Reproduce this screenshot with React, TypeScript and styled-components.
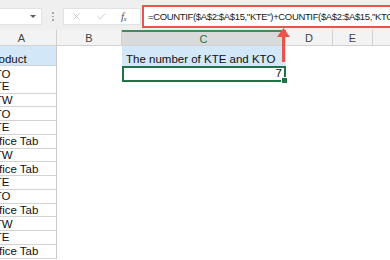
import React from "react"
import styled, { createGlobalStyle } from "styled-components"
import { X, Check } from "lucide-react"

const GlobalStyle = createGlobalStyle`
  html, body {
    margin: 0;
    padding: 0;
    background: #fff;
  }
  body {
    font-family: "Liberation Sans", Arial, sans-serif;
  }
`

const COLS = "70px 65px 164px 47px 40px 34px"

const Frame = styled.div`
  position: relative;
  width: 390px;
  height: 260px;
  overflow: hidden;
  background: #fff;
`

const Toolbar = styled.div`
  display: flex;
  align-items: center;
  height: 30px;
  padding-top: 2px;
  box-sizing: border-box;
  background: #efefef;

  & > * {
    flex: none;
  }
`

const NameBox = styled.div`
  display: flex;
  align-items: center;
  justify-content: flex-end;
  width: 42px;
  height: 17px;
  padding-right: 5px;
  box-sizing: border-box;
  background: #fff;
  border: 1px solid #e2e2e2;
  border-left: none;
`

const Caret = styled.span`
  width: 0;
  height: 0;
  border-left: 3px solid transparent;
  border-right: 3px solid transparent;
  border-top: 3px solid #5a5a5a;
`

const Grip = styled.span`
  width: 2px;
  height: 9px;
  margin: 0 9px 0 10px;
  background: repeating-linear-gradient(to bottom, #a8a8a8 0 2px, transparent 2px 3.5px);
`

const FnBox = styled.div`
  display: flex;
  align-items: center;
  gap: 14px;
  width: 78px;
  height: 17px;
  padding-left: 7px;
  box-sizing: border-box;
  background: #fff;
  border: 1px solid #e2e2e2;
  color: #bcbcbc;
`

const Fx = styled.span`
  font-family: "Liberation Serif", "Times New Roman", serif;
  font-style: italic;
  font-size: 11px;
  color: #555;
  letter-spacing: -0.5px;

  sub {
    font-size: 7px;
    vertical-align: -1px;
  }
`

const FormulaBox = styled.div`
  display: flex;
  align-items: center;
  width: 270px;
  height: 23px;
  margin-left: 1px;
  padding-left: 4px;
  box-sizing: border-box;
  background: #fff;
  border: 2px solid #e9544b;
  font-size: 9.5px;
  letter-spacing: -0.35px;
  color: #1a1a1a;
  white-space: nowrap;
  overflow: hidden;
`

const Sheet = styled.div`
  width: 420px;
  margin-left: -13px;
`

const HeadRow = styled.div`
  display: grid;
  grid-template-columns: ${COLS};
  height: 15px;
  background: #f3f3f3;
  border-bottom: 1px solid #d2d2d2;
`

const HeadCell = styled.div<{ $active?: boolean }>`
  display: flex;
  align-items: center;
  justify-content: center;
  box-sizing: border-box;
  font-size: 11px;
  color: ${(p) => (p.$active ? "#217346" : "#444")};
  background: ${(p) => (p.$active ? "#dadada" : "transparent")};
  border-top: ${(p) => (p.$active ? "2px solid #3f8a5f" : "none")};
  border-right: 1px solid #d0d0d0;
`

const Row = styled.div<{ $tall?: boolean }>`
  display: grid;
  grid-template-columns: ${COLS};
  height: ${(p) => (p.$tall ? "20px" : "13.75px")};
`

const ACell = styled.div<{ $fill?: boolean }>`
  display: flex;
  align-items: flex-end;
  box-sizing: border-box;
  background: ${(p) => (p.$fill ? "#d2e7f8" : "#fff")};
  border-right: 1px solid #c6c6c6;
  border-bottom: 1px solid #d3d3d3;
  font-size: 11.5px;
  line-height: 1;
  color: #111;
  white-space: nowrap;
  overflow: hidden;
`

const Blank = styled.div``

const LabelCell = styled.div`
  display: flex;
  align-items: flex-end;
  padding: 0 0 1px 4px;
  box-sizing: border-box;
  background: #d2e7f8;
  font-size: 11.5px;
  line-height: 1;
  color: #111;
  white-space: nowrap;
`

const ActiveCell = styled.div`
  position: relative;
  display: flex;
  align-items: flex-end;
  justify-content: flex-end;
  padding: 0 2px 0 0;
  box-sizing: border-box;
  border: 2px solid #217346;
  font-size: 11.5px;
  line-height: 1;
  color: #111;
`

const Handle = styled.span`
  position: absolute;
  right: -4px;
  bottom: -4px;
  width: 5px;
  height: 5px;
  background: #217346;
  border: 1px solid #fff;
`

const Arrow = styled.svg`
  position: absolute;
  left: 277px;
  top: 28px;
`

const items = [
  "KTO",
  "KTE",
  "KTW",
  "KTO",
  "KTE",
  "Office Tab",
  "KTW",
  "Office Tab",
  "KTE",
  "KTO",
  "Office Tab",
  "KTW",
  "KTE",
  "Office Tab",
]

const App = () => {
  return (
    <Frame>
      <GlobalStyle />
      <Toolbar>
        <NameBox>
          <Caret />
        </NameBox>
        <Grip />
        <FnBox>
          <X size={11} strokeWidth={1.6} />
          <Check size={11} strokeWidth={1.6} />
          <Fx>
            f<sub>x</sub>
          </Fx>
        </FnBox>
        <FormulaBox>=COUNTIF($A$2:$A$15,"KTE")+COUNTIF($A$2:$A$15,"KTO")</FormulaBox>
      </Toolbar>
      <Sheet>
        <HeadRow>
          <HeadCell>A</HeadCell>
          <HeadCell>B</HeadCell>
          <HeadCell $active>C</HeadCell>
          <HeadCell>D</HeadCell>
          <HeadCell>E</HeadCell>
          <HeadCell />
        </HeadRow>
        <Row $tall>
          <ACell $fill>Product</ACell>
          <Blank />
          <LabelCell>The number of KTE and KTO</LabelCell>
        </Row>
        {items.map((item, i) => (
          <Row key={i}>
            <ACell>{item}</ACell>
            <Blank />
            {i === 0 && (
              <ActiveCell>
                7
                <Handle />
              </ActiveCell>
            )}
          </Row>
        ))}
      </Sheet>
      <Arrow width="13" height="34" viewBox="0 0 13 34">
        <polygon points="6.5,0 13,9 0,9" fill="#e9544b" />
        <rect x="5" y="8" width="3" height="26" fill="#e9544b" />
      </Arrow>
    </Frame>
  )
}

export default App
